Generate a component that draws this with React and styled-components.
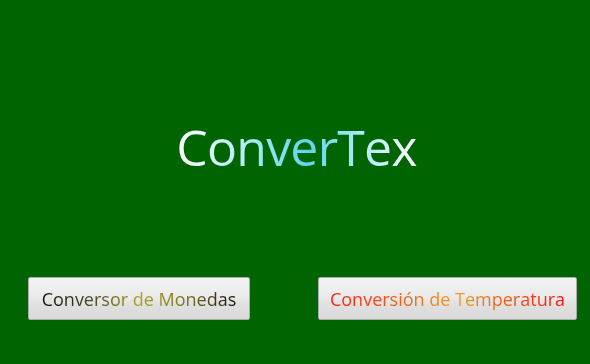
import React from "react";
import styled, { createGlobalStyle } from "styled-components";

const GlobalStyle = createGlobalStyle`
  html, body {
    margin: 0;
    padding: 0;
    background: #006400;
  }
  body {
    font-family: "Open Sans", "Noto Sans", sans-serif;
  }
`;

const Screen = styled.div`
  width: 590px;
  height: 364px;
  background: #006400;
  display: flex;
  flex-direction: column;
  box-sizing: border-box;
  padding-top: 114px;
`;

const Title = styled.h1`
  margin: 0 0 0 3px;
  align-self: center;
  font-size: 50px;
  font-weight: 400;
  line-height: 66px;
  letter-spacing: -0.8px;
  background: linear-gradient(90deg, #ffffff 0%, #bdeef6 25%, #5dd6ef 55%, #a9e8f4 75%, #ffffff 100%);
  -webkit-background-clip: text;
  background-clip: text;
  color: transparent;
`;

const ButtonRow = styled.div`
  display: flex;
  justify-content: space-between;
  padding: 0 13px 0 28px;
  margin-top: 97px;
`;

const Button = styled.button`
  height: 43px;
  width: ${(p) => p.$w}px;
  box-sizing: border-box;
  border: 1px solid #adadad;
  border-radius: 2px;
  background: linear-gradient(180deg, #f2f2f2 0%, #ebebeb 45%, #e2e2e2 60%, #d9d9d9 100%);
  font-family: "Open Sans", "Noto Sans", sans-serif;
  font-size: 18px;
  padding: 0;
  cursor: pointer;
`;

const ButtonLabel = styled.span`
  background: ${(p) => p.$grad};
  -webkit-background-clip: text;
  background-clip: text;
  color: transparent;
`;

export default function App() {
  return (
    <>
      <GlobalStyle />
      <Screen>
        <Title>ConverTex</Title>
        <ButtonRow>
          <Button $w={222}>
            <ButtonLabel $grad="linear-gradient(90deg, #111111 0%, #555522 30%, #b0a21c 50%, #7a7020 75%, #111111 100%)">
              Conversor de Monedas
            </ButtonLabel>
          </Button>
          <Button $w={259}>
            <ButtonLabel $grad="linear-gradient(90deg, #ff1a10 0%, #f06018 30%, #eca020 55%, #f04a14 80%, #ff1010 100%)">
              Conversión de Temperatura
            </ButtonLabel>
          </Button>
        </ButtonRow>
      </Screen>
    </>
  );
}
